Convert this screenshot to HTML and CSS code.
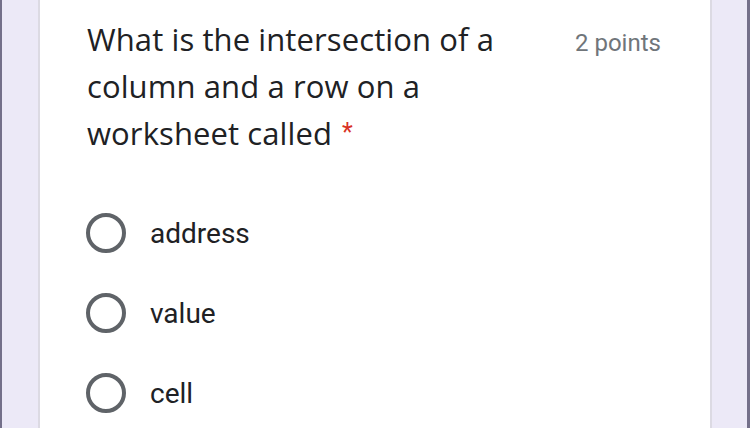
FILE: index.html
```html
<!DOCTYPE html>
<html lang="en">
<head>
  <meta charset="UTF-8">
  <meta name="viewport" content="width=device-width, initial-scale=1.0">
  <title>Quiz question</title>
  <link rel="stylesheet" href="styles.css">
</head>
<body>
  <div class="screen">
    <div class="question-card">
      <div class="question-header">
        <div class="question-title required">What is the intersection of a column and a row on a worksheet called</div>
        <div class="points">2 points</div>
      </div>

      <div class="options">
        <label class="option">
          <span class="radio"></span>
          <span class="option-label">address</span>
        </label>
        <label class="option">
          <span class="radio"></span>
          <span class="option-label">value</span>
        </label>
        <label class="option">
          <span class="radio"></span>
          <span class="option-label">cell</span>
        </label>
      </div>
    </div>
  </div>
</body>
</html>
```

FILE: styles.css
```css
* {
  margin: 0;
  padding: 0;
  box-sizing: border-box;
}

html, body {
  height: 100%;
  overflow: hidden;
}

body {
  background: #ece9f7;
}

.screen {
  height: 100%;
  border-left: 2px solid #74708a;
  border-right: 3px solid #74708a;
  padding: 0 35px 0 36px;
}

.question-card {
  height: 100%;
  background: #fff;
  border-left: 2px solid #dcdae3;
  border-right: 2px solid #dcdae3;
  padding: 16px 0 0 47px;
}

.question-header {
  display: flex;
  align-items: baseline;
}

.question-title {
  width: 472px;
  font-family: "Open Sans", "Liberation Sans", sans-serif;
  font-size: 31px;
  letter-spacing: 0.1px;
  line-height: 47px;
  color: #202124;
}

.required::after {
  content: "*";
  margin-left: 10px;
  font-family: Roboto, "Liberation Sans", sans-serif;
  font-size: 25px;
  line-height: 1;
  vertical-align: 4px;
  color: #d93025;
}

.points {
  margin-left: 16px;
  font-family: Roboto, "Liberation Sans", sans-serif;
  font-size: 24px;
  color: #70757a;
}

.options {
  margin-top: 36px;
  display: flex;
  flex-direction: column;
}

.option {
  height: 80px;
  display: flex;
  align-items: center;
  gap: 24px;
  margin-left: -1px;
}

.radio {
  width: 40px;
  height: 40px;
  border: 4px solid #5f6368;
  border-radius: 50%;
  flex-shrink: 0;
}

.option-label {
  font-family: Roboto, "Liberation Sans", sans-serif;
  font-size: 28px;
  color: #202124;
}
```
